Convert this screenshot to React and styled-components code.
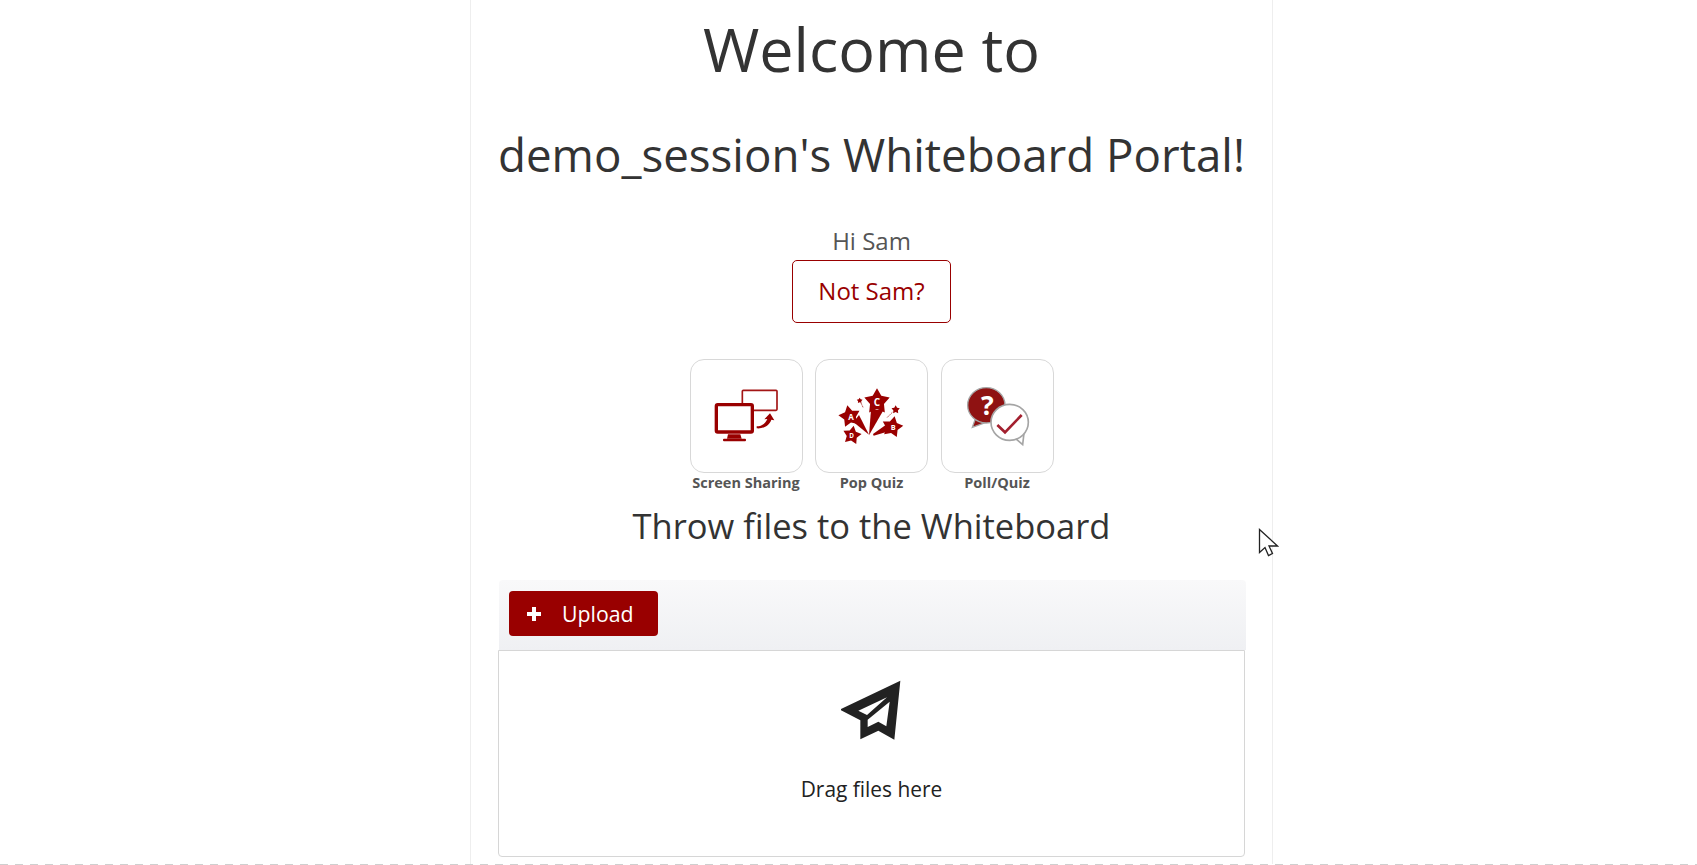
// App.jsx
import React from 'react';
import styled, { createGlobalStyle } from 'styled-components';

const GlobalStyle = createGlobalStyle`
  html, body {
    margin: 0;
    padding: 0;
    background: #fff;
    font-family: "Open Sans", "Liberation Sans", sans-serif;
  }
`;

const Page = styled.div`
  position: relative;
  height: 865px;
  overflow: hidden;
  display: flex;
  flex-direction: column;
`;

const Portal = styled.main`
  box-sizing: border-box;
  flex: 1;
  width: 803px;
  margin-left: 470px;
  padding: 0 26px;
  border-left: 1px solid #eeeeee;
  border-right: 1px solid #eeeeee;
  display: flex;
  flex-direction: column;
  align-items: center;
  text-align: center;
`;

const DashedRule = styled.div`
  height: 1px;
  background: repeating-linear-gradient(90deg, #cfcfcf 0 8px, transparent 8px 15px);
`;

const Welcome = styled.h1`
  margin: 7px 0 0;
  font-size: 61px;
  line-height: 84px;
  font-weight: 400;
  color: #333;
`;

const SessionTitle = styled.h2`
  margin: 31px 0 0;
  font-size: 45.7px;
  line-height: 64px;
  font-weight: 400;
  color: #333;
  white-space: nowrap;
`;

const Greeting = styled.div`
  margin-top: 40px;
  font-size: 24px;
  line-height: 30px;
  color: #555;
`;

const NotYouButton = styled.button`
  box-sizing: border-box;
  width: 159px;
  height: 63px;
  margin-top: 4px;
  padding: 0 0 3px;
  background: #fff;
  border: 1px solid #990000;
  border-radius: 5px;
  color: #990000;
  font-family: inherit;
  font-size: 24px;
`;

const ToolRow = styled.div`
  display: flex;
  gap: 12.5px;
  margin-top: 36px;
`;

const Tool = styled.div`
  width: 113px;
  display: flex;
  flex-direction: column;
  align-items: center;
`;

const ToolTile = styled.div`
  box-sizing: border-box;
  width: 113px;
  height: 114px;
  background: #fff;
  border: 1px solid #d8d8d8;
  border-radius: 14px;

  svg {
    display: block;
    width: 111px;
    height: 112px;
  }
`;

const ToolLabel = styled.span`
  font-size: 14.5px;
  line-height: 20px;
  font-weight: 700;
  color: #555;
  white-space: nowrap;
`;

const ThrowTitle = styled.h3`
  margin: 9px 0 0;
  font-size: 34.5px;
  line-height: 48px;
  font-weight: 400;
  color: #333;
`;

const UploadPanel = styled.section`
  width: 747px;
  margin-top: 30px;
`;

const UploadHeader = styled.div`
  box-sizing: border-box;
  height: 70px;
  margin: 0 -1px 0 1px;
  padding: 11px 10px;
  background: linear-gradient(180deg, #f9f9fa 0%, #eff0f3 100%);
  border-radius: 4px 4px 0 0;
  display: flex;
  align-items: flex-start;
`;

const UploadButton = styled.button`
  box-sizing: border-box;
  width: 149px;
  height: 45px;
  padding: 0 0 0 17px;
  background: #990000;
  border: 0;
  border-radius: 4px;
  color: #fff;
  font-family: inherit;
  font-size: 21.3px;
  font-weight: 500;
  display: flex;
  align-items: center;
  gap: 20px;
`;

const DropZone = styled.div`
  box-sizing: border-box;
  height: 207px;
  background: #fff;
  border: 1px solid #d6d6d6;
  border-radius: 0 0 4px 4px;
  display: flex;
  flex-direction: column;
  align-items: center;
  padding-top: 28px;
  color: #222;
  font-size: 20.9px;
`;

const DropText = styled.div`
  margin-top: 35px;
  line-height: 26px;
`;

const CursorMark = styled.svg`
  position: absolute;
  left: 1258px;
  top: 528px;
`;

// five pointed star around cx,cy, fatter than a regular one
const starPoints = (cx, cy, r, rot = 0) => {
  const pts = [];
  for (let i = 0; i < 10; i++) {
    const rad = i % 2 === 0 ? r : r * 0.55;
    const a = (-90 + rot + i * 36) * (Math.PI / 180);
    pts.push(`${(cx + rad * Math.cos(a)).toFixed(1)},${(cy + rad * Math.sin(a)).toFixed(1)}`);
  }
  return pts.join(' ');
};

const ScreenIcon = () => (
  <svg viewBox="61 61 333 336">
    <path d="M215 205V155Q215 152 218 152H316Q319 152 319 155V209Q319 212 316 212H250" fill="none" stroke="#a31515" strokeWidth="5" />
    <rect x="137" y="195" width="108" height="82" rx="4" fill="#fff" stroke="#990000" strokeWidth="10" />
    <path d="M172 284H209L213 297H169Z" fill="#990000" />
    <rect x="157" y="297" width="69" height="8" rx="3" fill="#990000" />
    <path d="M258 260C274 260 285 250 290 238L281 239L298 221L311 242L302 240C297 256 280 268 258 266Z" fill="#990000" />
  </svg>
);

const StarsIcon = () => (
  <svg viewBox="439 61 333 336">
    <g fill="#990000">
      <polygon points="604,210 642,210 598,287" />
      <polygon points="552,248 568,226 598,285" />
      <polygon points="610,283 648,256 660,274 612,288" />
      <polygon points={starPoints(622, 186, 40)} />
      <polygon points={starPoints(540, 230, 34, -12)} />
      <polygon points={starPoints(668, 262, 33, 12)} />
      <polygon points={starPoints(547, 287, 29, 10)} />
      <polygon points={starPoints(570, 183, 9)} />
      <polygon points={starPoints(678, 210, 13)} />
    </g>
    <path d="M574 190L581 205M668 218L652 234" stroke="#990000" strokeWidth="2" strokeDasharray="6 2" />
    <g fill="#fff" fontFamily='"Open Sans", sans-serif' fontWeight="700" textAnchor="middle">
      <text x="622" y="199" fontSize="30">C</text>
      <text x="544" y="240" fontSize="24">A</text>
      <text x="671" y="272" fontSize="22">B</text>
      <text x="546" y="294" fontSize="19">D</text>
    </g>
  </svg>
);

const PollIcon = () => (
  <svg viewBox="814 61 333 336">
    <path d="M916 232L905 263L946 248Z" fill="#8f1212" stroke="#a5a5a5" strokeWidth="4" />
    <ellipse cx="947" cy="197" rx="56" ry="53" fill="#8f1212" stroke="#a5a5a5" strokeWidth="4" />
    <text x="950" y="225" fill="#fff" fontFamily='"Open Sans", sans-serif' fontWeight="700" fontSize="80" textAnchor="middle">?</text>
    <path d="M1034 296L1056 315L1060 280Z" fill="#fff" stroke="#a5a5a5" strokeWidth="5" />
    <ellipse cx="1017" cy="248" rx="56" ry="54" fill="#fff" stroke="#a5a5a5" strokeWidth="5" />
    <path d="M980 256L1003 278L1053 226" fill="none" stroke="#a3202f" strokeWidth="8" />
  </svg>
);

const PlaneIcon = () => (
  <svg width="62" height="62" viewBox="120 60 186 186">
    <path
      fillRule="evenodd"
      fill="#222"
      d="M298 65L280 242L232 215L178 241V184L116 152ZM172 155L198 168L258 115ZM266 128L200 182V204L232 188L256 202Z"
    />
  </svg>
);

const tools = [
  { label: 'Screen Sharing', icon: <ScreenIcon /> },
  { label: 'Pop Quiz', icon: <StarsIcon /> },
  { label: 'Poll/Quiz', icon: <PollIcon /> },
];

const App = () => {
  return (
    <Page>
      <GlobalStyle />
      <Portal>
        <Welcome>Welcome to</Welcome>
        <SessionTitle>demo_session's Whiteboard Portal!</SessionTitle>
        <Greeting>Hi Sam</Greeting>
        <NotYouButton>Not Sam?</NotYouButton>

        <ToolRow>
          {tools.map((tool) => (
            <Tool key={tool.label}>
              <ToolTile>{tool.icon}</ToolTile>
              <ToolLabel>{tool.label}</ToolLabel>
            </Tool>
          ))}
        </ToolRow>

        <ThrowTitle>Throw files to the Whiteboard</ThrowTitle>

        <UploadPanel>
          <UploadHeader>
            <UploadButton>
              <svg width="16" height="16" viewBox="0 0 16 16">
                <path d="M6 1H10V6H15V10H10V15H6V10H1V6H6Z" fill="#fff" />
              </svg>
              Upload
            </UploadButton>
          </UploadHeader>
          <DropZone>
            <PlaneIcon />
            <DropText>Drag files here</DropText>
          </DropZone>
        </UploadPanel>
      </Portal>
      <DashedRule />

      <CursorMark width="21" height="30" viewBox="0 0 21 30">
        <path d="M1.5 1.5V24.5L7 19.5L10.5 27.5L14.5 25.5L11 18H19.5Z" fill="#fff" stroke="#222" strokeWidth="1.3" />
      </CursorMark>
    </Page>
  );
};

export default App;
